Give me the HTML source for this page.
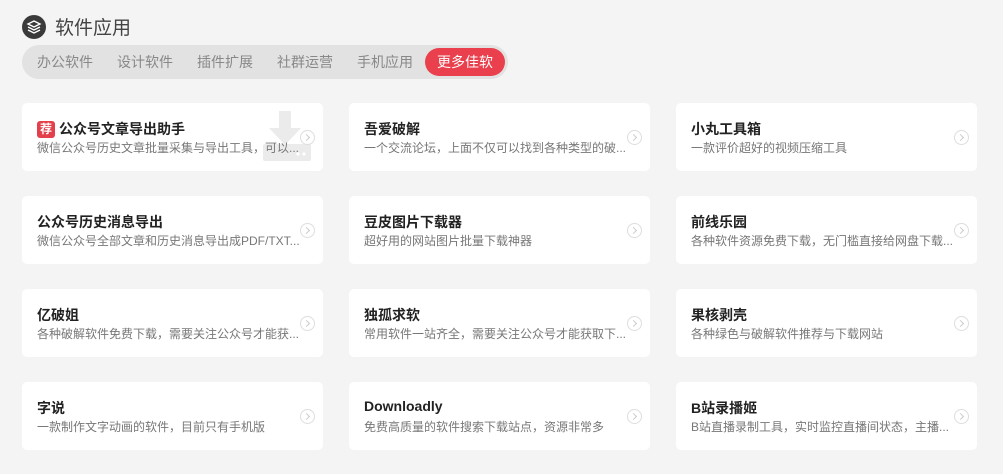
<!DOCTYPE html>
<html><head><meta charset="utf-8"><style>
*{margin:0;padding:0;box-sizing:border-box}
body{width:1003px;height:474px;background:#f4f4f4;font-family:"Liberation Sans","Noto Sans CJK SC",sans-serif;position:relative;overflow:hidden}
.hd{position:absolute;left:22px;top:13px;display:flex;align-items:center}
.hd .ic{width:24px;height:24px;border-radius:50%;background:#3a3a3a;display:flex;align-items:center;justify-content:center}
.hd span{font-size:19px;color:#444;margin-left:9px}
.tabs{position:absolute;left:22px;top:45px;width:486px;height:34px;background:#e2e2e2;border-radius:17px}
.tabs span{position:absolute;top:0;line-height:34px;font-size:14px;color:#888}
.tabs .on{left:403px;top:3px;width:80px;height:28px;line-height:28px;background:#ea3f4c;color:#fff;border-radius:14px;text-align:center}
.card{position:absolute;width:301px;height:68px;background:#fff;border-radius:5px}
.card b{position:absolute;left:15px;top:16px;font-size:14px;color:#222;font-weight:bold;white-space:nowrap}
.card p{position:absolute;left:15px;top:36px;font-size:12px;color:#777;white-space:nowrap;width:265px;overflow:hidden}
.card i{position:absolute;right:8px;top:27px;width:15px;height:15px;border:1px solid #ddd;border-radius:50%}
.card i:after{content:"";position:absolute;left:3px;top:4px;width:4px;height:4px;border-top:1px solid #ccc;border-right:1px solid #ccc;transform:rotate(45deg)}
.tag{display:inline-block;background:#e4404c;color:#fff;font-size:12px;padding:0 3px;border-radius:3px;margin-right:4px;line-height:17px;vertical-align:1px}
</style></head><body>
<div class="hd"><div class="ic"><svg width="16" height="16" viewBox="0 0 16 16" fill="none" stroke="#fff" stroke-width="1.4"><path d="M8 2l6 3-6 3-6-3z"/><path d="M2 8l6 3 6-3"/><path d="M2 11l6 3 6-3"/></svg></div><span>软件应用</span></div>
<div class="tabs"><span style="left:15px">办公软件</span><span style="left:95px">设计软件</span><span style="left:175px">插件扩展</span><span style="left:255px">社群运营</span><span style="left:335px">手机应用</span><span class="on">更多佳软</span></div>

<div class="card" style="left:22px;top:103px"><svg style="position:absolute;left:241px;top:8px" width="48" height="50" viewBox="0 0 48 50"><path d="M16 0h12v17h10L22 34 6 17h10z" fill="#ebebeb"/><rect x="0" y="33" width="48" height="17" rx="2" fill="#ebebeb"/><circle cx="35" cy="43" r="1.6" fill="#fff"/><circle cx="41" cy="43" r="1.6" fill="#fff"/></svg><b><span class="tag">荐</span>公众号文章导出助手</b><p>微信公众号历史文章批量采集与导出工具，可以...</p><i></i></div>
<div class="card" style="left:349px;top:103px"><b>吾爱破解</b><p>一个交流论坛，上面不仅可以找到各种类型的破...</p><i></i></div>
<div class="card" style="left:676px;top:103px"><b>小丸工具箱</b><p>一款评价超好的视频压缩工具</p><i></i></div>

<div class="card" style="left:22px;top:196px"><b>公众号历史消息导出</b><p>微信公众号全部文章和历史消息导出成PDF/TXT...</p><i></i></div>
<div class="card" style="left:349px;top:196px"><b>豆皮图片下载器</b><p>超好用的网站图片批量下载神器</p><i></i></div>
<div class="card" style="left:676px;top:196px"><b>前线乐园</b><p>各种软件资源免费下载，无门槛直接给网盘下载...</p><i></i></div>

<div class="card" style="left:22px;top:289px"><b>亿破姐</b><p>各种破解软件免费下载，需要关注公众号才能获...</p><i></i></div>
<div class="card" style="left:349px;top:289px"><b>独孤求软</b><p>常用软件一站齐全，需要关注公众号才能获取下...</p><i></i></div>
<div class="card" style="left:676px;top:289px"><b>果核剥壳</b><p>各种绿色与破解软件推荐与下载网站</p><i></i></div>

<div class="card" style="left:22px;top:382px"><b>字说</b><p>一款制作文字动画的软件，目前只有手机版</p><i></i></div>
<div class="card" style="left:349px;top:382px"><b>Downloadly</b><p>免费高质量的软件搜索下载站点，资源非常多</p><i></i></div>
<div class="card" style="left:676px;top:382px"><b>B站录播姬</b><p>B站直播录制工具，实时监控直播间状态，主播...</p><i></i></div>
</body></html>
